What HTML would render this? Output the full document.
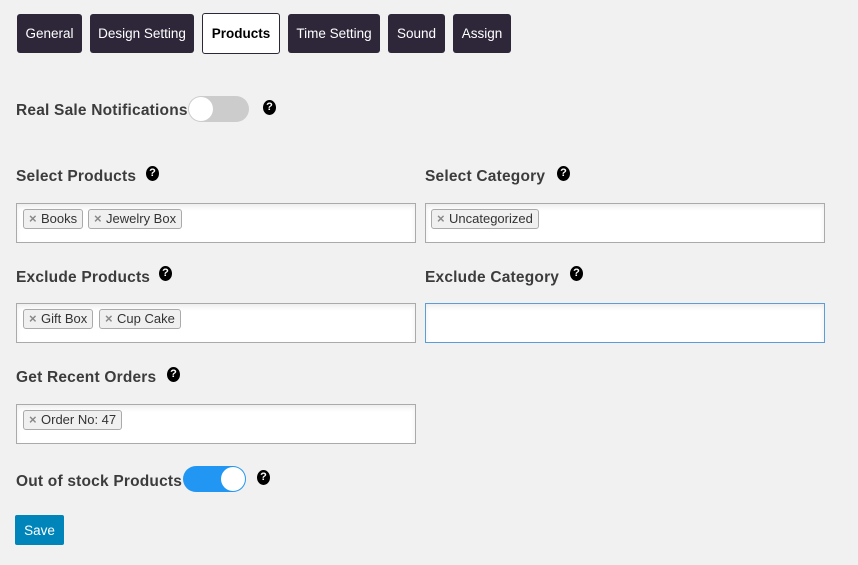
<!DOCTYPE html>
<html><head><meta charset="utf-8"><style>
*{box-sizing:border-box;margin:0;padding:0}
body{width:858px;height:565px;background:#f1f1f1;font-family:"Liberation Sans",sans-serif;position:relative;overflow:hidden;color:#3c3c3c}
.tab{position:absolute;top:14px;height:39px;background:#2e2639;color:#fff;font-size:13.5px;border-radius:3px;display:flex;align-items:center;justify-content:center}
.tab.act{background:#fff;color:#000;font-weight:bold;border:1px solid #2e2639;top:13px;height:41px}
.lbl{position:absolute;font-size:15.5px;font-weight:bold;color:#3c3c3c;line-height:18px;letter-spacing:0.2px}
.q{position:absolute;width:13px;height:15px;background:#000;border-radius:50%;color:#fff;font-size:11px;font-weight:bold;text-align:center;line-height:15px}
.box{position:absolute;width:400px;height:40px;background:#fff;border:1px solid #aaa;box-shadow:inset 0 3px 5px rgba(0,0,0,.07)}
.chip{position:absolute;top:5px;height:20px;border:1px solid #aaa;border-radius:3px;background:#f0f0f0;font-size:13px;color:#333;line-height:18px;padding-left:17px;padding-right:5px}
.chip:before{content:"×";position:absolute;left:5px;top:0;color:#888;font-weight:bold;font-size:13px}
.tog{position:absolute;height:26px;border-radius:13px}
.knob{position:absolute;top:1px;width:24px;height:24px;border-radius:50%;background:#fff}
</style></head><body>
<div class="tab" style="left:17px;width:65px">General</div>
<div class="tab" style="left:90px;width:104px">Design Setting</div>
<div class="tab act" style="left:202px;width:78px">Products</div>
<div class="tab" style="left:288px;width:92px">Time Setting</div>
<div class="tab" style="left:388px;width:57px">Sound</div>
<div class="tab" style="left:453px;width:58px">Assign</div>

<div class="lbl" style="left:16px;top:102px">Real Sale Notifications</div>
<div class="tog" style="left:188px;top:96px;width:61px;background:#ccc"><div class="knob" style="left:1px"></div></div>
<div class="q" style="left:263px;top:100px">?</div>

<div class="lbl" style="left:16px;top:168px">Select Products</div>
<div class="q" style="left:146px;top:166px">?</div>
<div class="box" style="left:16px;top:203px"><div class="chip" style="left:6px">Books</div><div class="chip" style="left:71px">Jewelry Box</div></div>

<div class="lbl" style="left:425px;top:168px">Select Category</div>
<div class="q" style="left:557px;top:166px">?</div>
<div class="box" style="left:425px;top:203px"><div class="chip" style="left:5px">Uncategorized</div></div>

<div class="lbl" style="left:16px;top:269px">Exclude Products</div>
<div class="q" style="left:159px;top:266px">?</div>
<div class="box" style="left:16px;top:303px"><div class="chip" style="left:6px">Gift Box</div><div class="chip" style="left:82px">Cup Cake</div></div>

<div class="lbl" style="left:425px;top:269px">Exclude Category</div>
<div class="q" style="left:570px;top:266px">?</div>
<div class="box" style="left:425px;top:303px;border-color:#5b9dd9"></div>

<div class="lbl" style="left:16px;top:369px">Get Recent Orders</div>
<div class="q" style="left:167px;top:367px">?</div>
<div class="box" style="left:16px;top:404px"><div class="chip" style="left:6px">Order No: 47</div></div>

<div class="lbl" style="left:16px;top:473px">Out of stock Products</div>
<div class="tog" style="left:183px;top:466px;width:63px;background:#2196f3"><div class="knob" style="left:38px"></div></div>
<div class="q" style="left:257px;top:470px">?</div>

<div style="position:absolute;left:15px;top:515px;width:49px;height:30px;background:#0085ba;border-radius:2px;color:#fff;font-size:13.5px;text-align:center;line-height:31px">Save</div>
</body></html>
